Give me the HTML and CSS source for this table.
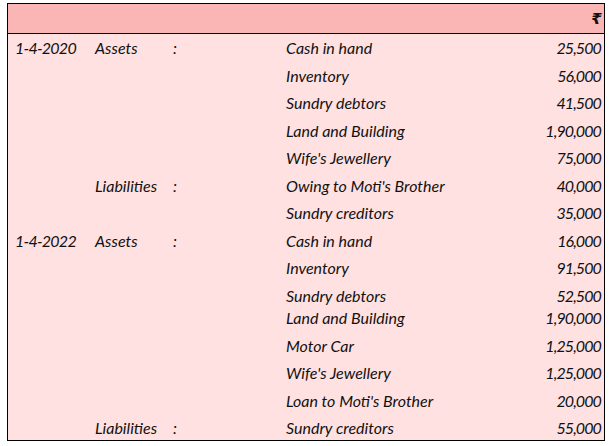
FILE: index.html
```html
<!DOCTYPE html>
<html>
<head>
<meta charset="utf-8">
<link rel="stylesheet" href="styles.css">
</head>
<body>
<div class="box">
  <div class="head"><span class="rupee">₹</span></div>
  <div class="body">
    <div class="row"><span class="date">1-4-2020</span><span class="cat">Assets</span><span class="colon">:</span><span class="item">Cash in hand</span><span class="amt">25,500</span></div>
    <div class="row"><span class="date"></span><span class="cat"></span><span class="colon"></span><span class="item">Inventory</span><span class="amt">56,000</span></div>
    <div class="row"><span class="date"></span><span class="cat"></span><span class="colon"></span><span class="item">Sundry debtors</span><span class="amt">41,500</span></div>
    <div class="row"><span class="date"></span><span class="cat"></span><span class="colon"></span><span class="item">Land and Building</span><span class="amt">1,90,000</span></div>
    <div class="row"><span class="date"></span><span class="cat"></span><span class="colon"></span><span class="item">Wife's Jewellery</span><span class="amt">75,000</span></div>
    <div class="row"><span class="date"></span><span class="cat">Liabilities</span><span class="colon">:</span><span class="item">Owing to Moti's Brother</span><span class="amt">40,000</span></div>
    <div class="row"><span class="date"></span><span class="cat"></span><span class="colon"></span><span class="item">Sundry creditors</span><span class="amt">35,000</span></div>
    <div class="row"><span class="date">1-4-2022</span><span class="cat">Assets</span><span class="colon">:</span><span class="item">Cash in hand</span><span class="amt">16,000</span></div>
    <div class="row"><span class="date"></span><span class="cat"></span><span class="colon"></span><span class="item">Inventory</span><span class="amt">91,500</span></div>
    <div class="row short"><span class="date"></span><span class="cat"></span><span class="colon"></span><span class="item">Sundry debtors</span><span class="amt">52,500</span></div>
    <div class="row"><span class="date"></span><span class="cat"></span><span class="colon"></span><span class="item">Land and Building</span><span class="amt">1,90,000</span></div>
    <div class="row"><span class="date"></span><span class="cat"></span><span class="colon"></span><span class="item">Motor Car</span><span class="amt">1,25,000</span></div>
    <div class="row"><span class="date"></span><span class="cat"></span><span class="colon"></span><span class="item">Wife's Jewellery</span><span class="amt">1,25,000</span></div>
    <div class="row"><span class="date"></span><span class="cat"></span><span class="colon"></span><span class="item">Loan to Moti's Brother</span><span class="amt">20,000</span></div>
    <div class="row last"><span class="date"></span><span class="cat">Liabilities</span><span class="colon">:</span><span class="item">Sundry creditors</span><span class="amt">55,000</span></div>
  </div>
</div>
</body>
</html>
```
FILE: styles.css
```css
html, body {
  margin: 0;
  padding: 0;
  background: #ffffff;
}
.box {
  margin: 3px 0 0 7px;
  width: 598px;
  box-sizing: border-box;
  border: 1px solid #000;
  font-family: Lato, "Open Sans", sans-serif;
  font-style: italic;
  font-size: 16px;
  color: #111;
}
.head {
  height: 29px;
  background: #fab5b5;
  border-bottom: 1px solid #000;
  display: flex;
  justify-content: flex-end;
  align-items: center;
  padding-right: 3px;
}
.rupee {
  font-family: "DejaVu Sans", sans-serif;
  font-style: normal;
  font-weight: bold;
  font-size: 15px;
  transform: skewX(-12deg);
}
.body {
  background: #ffe1e1;
  padding: 0 3px 0 7px;
}
.row {
  display: grid;
  grid-template-columns: 80px 78px 113px 1fr auto;
  height: 27.5px;
  line-height: 27.5px;
  white-space: nowrap;
}
.row.short {
  height: 22.5px;
}
.row.last {
  height: 26px;
}
.date {
  letter-spacing: -0.75px;
}
.amt {
  text-align: right;
  letter-spacing: -0.9px;
}
```
